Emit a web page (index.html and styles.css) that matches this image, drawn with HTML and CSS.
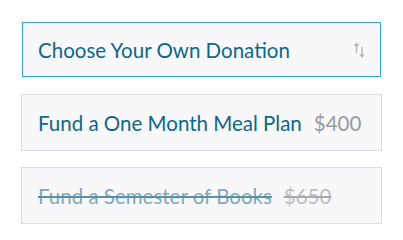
FILE: index.html
```html
<!DOCTYPE html>
<html>
<head>
<meta charset="utf-8">
<link rel="stylesheet" href="styles.css">
</head>
<body>
<div class="list">
  <div class="option chosen">
    <span class="label">Choose Your Own Donation</span>
    <svg class="sort" width="11" height="16" viewBox="0 0 11 16">
      <path d="M2.5 1.5 L2.5 11 M0.5 3.8 L2.5 1.5 L4.5 3.8" fill="none" stroke="#b9b9bd" stroke-width="1.5"/>
      <path d="M8 5 L8 14.5 M6 12.2 L8 14.5 L10 12.2" fill="none" stroke="#b9b9bd" stroke-width="1.5"/>
    </svg>
  </div>
  <div class="option">
    <span class="label">Fund a One Month Meal Plan</span>
    <span class="price">$400</span>
  </div>
  <div class="option disabled">
    <span class="label">Fund a Semester of Books</span>
    <span class="price">$650</span>
  </div>
</div>
</body>
</html>
```
FILE: styles.css
```css
html, body {
  margin: 0;
  padding: 0;
  background: #ffffff;
}
body {
  font-family: Lato, "Noto Sans", sans-serif;
}
.list {
  padding: 21px 21px 0 21px;
  display: flex;
  flex-direction: column;
  gap: 16px;
  width: 361px;
}
.option {
  box-sizing: border-box;
  height: 57px;
  border: 1px solid #dcdcde;
  background: #f8f8fa;
  display: flex;
  align-items: center;
  padding: 0 16px;
  font-size: 20.5px;
  gap: 12px;
}
.chosen {
  border-color: transparent;
  box-shadow: inset 0 0 0 1px #33aadf;
  justify-content: space-between;
}
.label {
  color: #0f6786;
}
.price {
  color: #9a9a9c;
}
.disabled .label {
  color: #80aabb;
  text-decoration: line-through;
  text-decoration-color: #5f8f9f;
}
.disabled .price {
  color: #bdbdbf;
  text-decoration: line-through;
  text-decoration-color: #a9a9ab;
}
```
